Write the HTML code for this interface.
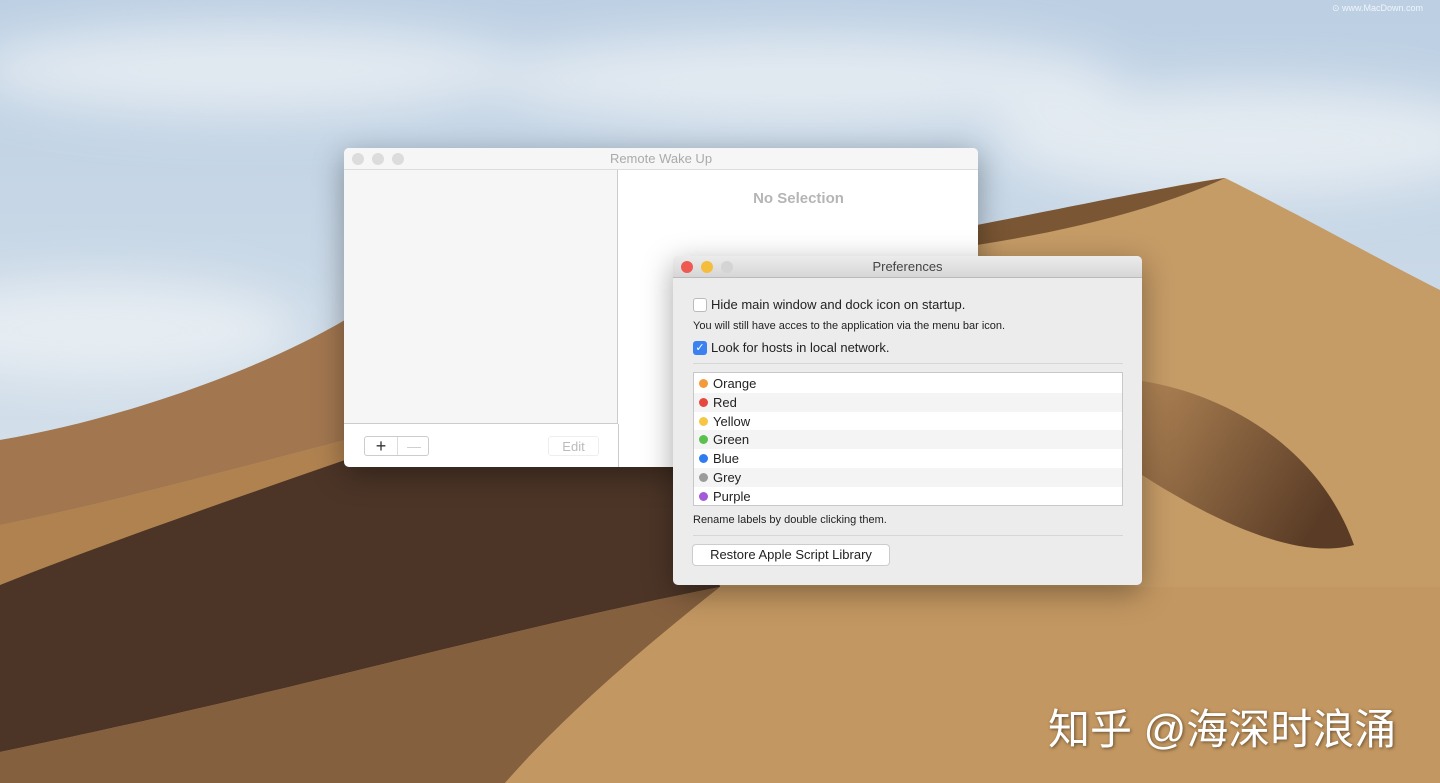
<!DOCTYPE html>
<html><head><meta charset="utf-8"><style>
*{margin:0;padding:0;box-sizing:border-box}
body{width:1440px;height:783px;overflow:hidden;position:relative;font-family:"Liberation Sans",sans-serif;background:#c9d9e8}
svg.bg{position:absolute;left:0;top:0}
.win{position:absolute;background:#fff;border-radius:5px;overflow:hidden;box-shadow:0 8px 30px rgba(0,0,0,.35)}
.tb{height:22px;background:#f6f6f6;border-bottom:1px solid #ddd;position:relative;text-align:center;font-size:13px;line-height:22px;color:#aaa}
.dot{position:absolute;top:5px;width:12px;height:12px;border-radius:50%;background:#dcdcdc}
.p .tb{background:linear-gradient(#ececec,#d6d6d6);color:#444;border-bottom:1px solid #bbb}
.row{height:18.8px;font-size:13px;line-height:19px;padding-left:19px;position:relative;color:#222}
.row i{position:absolute;left:5px;top:5px;width:9px;height:9px;border-radius:50%}
.row:nth-child(even){background:#f4f4f4}
</style></head><body>
<svg class="bg" width="1440" height="783" viewBox="0 0 1440 783">
<defs>
<linearGradient id="sky" x1="0" y1="0" x2="0" y2="1"><stop offset="0" stop-color="#bccfe3"/><stop offset=".5" stop-color="#d0dde9"/><stop offset="1" stop-color="#e2e9ee"/></linearGradient>
<linearGradient id="sh" x1="0" y1="0" x2="1" y2="0.5"><stop offset="0" stop-color="#b08455"/><stop offset="1" stop-color="#5a3c26"/></linearGradient>
<filter id="blur"><feGaussianBlur stdDeviation="25"/></filter>
</defs>
<rect width="1440" height="783" fill="url(#sky)"/>
<g filter="url(#blur)" opacity=".7">
<ellipse cx="250" cy="70" rx="280" ry="45" fill="#f2f5f7"/>
<ellipse cx="800" cy="80" rx="320" ry="45" fill="#f2f5f7"/>
<ellipse cx="1250" cy="140" rx="260" ry="55" fill="#f2f5f7"/>
<ellipse cx="100" cy="330" rx="200" ry="50" fill="#f2f5f7"/>
</g>
<path d="M0 440 C120 420 260 370 345 320 L980 240 C1080 205 1170 185 1225 178 C1300 215 1380 260 1440 290 L1440 783 L0 783Z" fill="#c59b66"/>
<path d="M0 440 C120 420 260 370 345 320 L345 440 C230 470 100 505 0 525Z" fill="#a27750"/>
<path d="M0 525 C100 505 230 470 345 440 L345 460 C230 500 100 545 0 585Z" fill="#b08250"/>
<path d="M0 585 C100 545 230 500 345 460 L690 460 L720 587 C500 630 300 690 0 752Z" fill="#4c3527"/>
<path d="M0 752 C300 690 500 630 720 587 C640 650 560 720 505 783 L0 783Z" fill="#85603f"/>
<path d="M720 587 C640 650 560 720 505 783 L1440 783 L1440 587Z" fill="#c39761"/>
<path d="M977 225 C1080 205 1170 186 1225 178 C1150 212 1060 232 977 245Z" fill="#7a5634"/>
<path d="M1142 381 C1230 395 1320 450 1354 545 C1300 560 1220 525 1142 475Z" fill="url(#sh)"/>
</svg>

<div class="win" style="left:344px;top:148px;width:634px;height:319px">
 <div class="tb">Remote Wake Up<span class="dot" style="left:8px"></span><span class="dot" style="left:28px"></span><span class="dot" style="left:48px"></span></div>
 <div style="position:absolute;left:0;top:22px;width:274px;height:254px;background:#f6f6f6;border-right:1px solid #ccc;border-bottom:1px solid #ccc"></div>
 <div style="position:absolute;left:274px;top:276px;width:1px;height:43px;background:#ccc"></div>
 <div style="position:absolute;left:20px;top:288px;width:65px;height:20px;border:1px solid #ccc;border-radius:3px;background:#fff">
  <span style="position:absolute;left:0;width:32px;text-align:center;font-size:18px;line-height:18px;color:#333">+</span>
  <span style="position:absolute;left:32px;top:0;width:1px;height:18px;background:#ddd"></span>
  <span style="position:absolute;left:33px;width:32px;text-align:center;font-size:14px;line-height:18px;color:#ccc">—</span></div>
 <div style="position:absolute;left:204px;top:288px;width:51px;height:20px;border:1px solid #eee;border-radius:3px;text-align:center;font-size:13px;line-height:19px;color:#bbb">Edit</div>
 <div style="position:absolute;left:275px;top:42px;width:359px;text-align:center;font-size:15px;font-weight:bold;color:#b5b5b5">No Selection</div>
</div>

<div class="win p" style="left:673px;top:256px;width:469px;height:329px;background:#ececec">
 <div class="tb">Preferences<span class="dot" style="left:8px;background:#ee5a52"></span><span class="dot" style="left:28px;background:#f4bd3c"></span><span class="dot" style="left:48px;background:#d4d4d4"></span></div>
 <div style="position:absolute;left:20px;top:42px;width:14px;height:14px;border:1px solid #bbb;border-radius:3px;background:#fff"></div>
 <div style="position:absolute;left:38px;top:41px;font-size:13px;color:#222">Hide main window and dock icon on startup.</div>
 <div style="position:absolute;left:20px;top:64px;font-size:11px;color:#222">You will still have acces to the application via the menu bar icon.</div>
 <div style="position:absolute;left:20px;top:85px;width:14px;height:14px;border-radius:3px;background:#3b82f0;color:#fff;font-size:11px;line-height:14px;text-align:center">✓</div>
 <div style="position:absolute;left:38px;top:84px;font-size:13px;color:#222">Look for hosts in local network.</div>
 <div style="position:absolute;left:20px;top:107px;width:430px;height:1px;background:#d6d6d6"></div>
 <div style="position:absolute;left:20px;top:116px;width:430px;height:134px;border:1px solid #c8c8c8;background:#fff;padding-top:1px">
  <div class="row"><i style="background:#f39a3a"></i>Orange</div>
  <div class="row"><i style="background:#e6483f"></i>Red</div>
  <div class="row"><i style="background:#f6c745"></i>Yellow</div>
  <div class="row"><i style="background:#5ac04e"></i>Green</div>
  <div class="row"><i style="background:#2f7bf0"></i>Blue</div>
  <div class="row"><i style="background:#9b9b9b"></i>Grey</div>
  <div class="row"><i style="background:#a25ad8"></i>Purple</div>
 </div>
 <div style="position:absolute;left:20px;top:258px;font-size:11px;color:#222">Rename labels by double clicking them.</div>
 <div style="position:absolute;left:20px;top:279px;width:430px;height:1px;background:#d6d6d6"></div>
 <div style="position:absolute;left:20px;top:289px;width:196px;height:20px;background:#fff;border-radius:3px;box-shadow:0 0 0 1px #ccc;text-align:center;font-size:13px;line-height:20px;color:#222">Restore Apple Script Library</div>
</div>

<div style="position:absolute;left:1048px;top:696px;font-family:'Liberation Sans','Noto Sans CJK SC',sans-serif;font-size:42px;color:#fff;text-shadow:1px 1px 3px rgba(0,0,0,.5);white-space:nowrap">知乎 @海深时浪涌</div>
<div style="position:absolute;left:1332px;top:3px;font-size:9px;color:#fff;opacity:.8">⊙ www.MacDown.com</div>
</body></html>
